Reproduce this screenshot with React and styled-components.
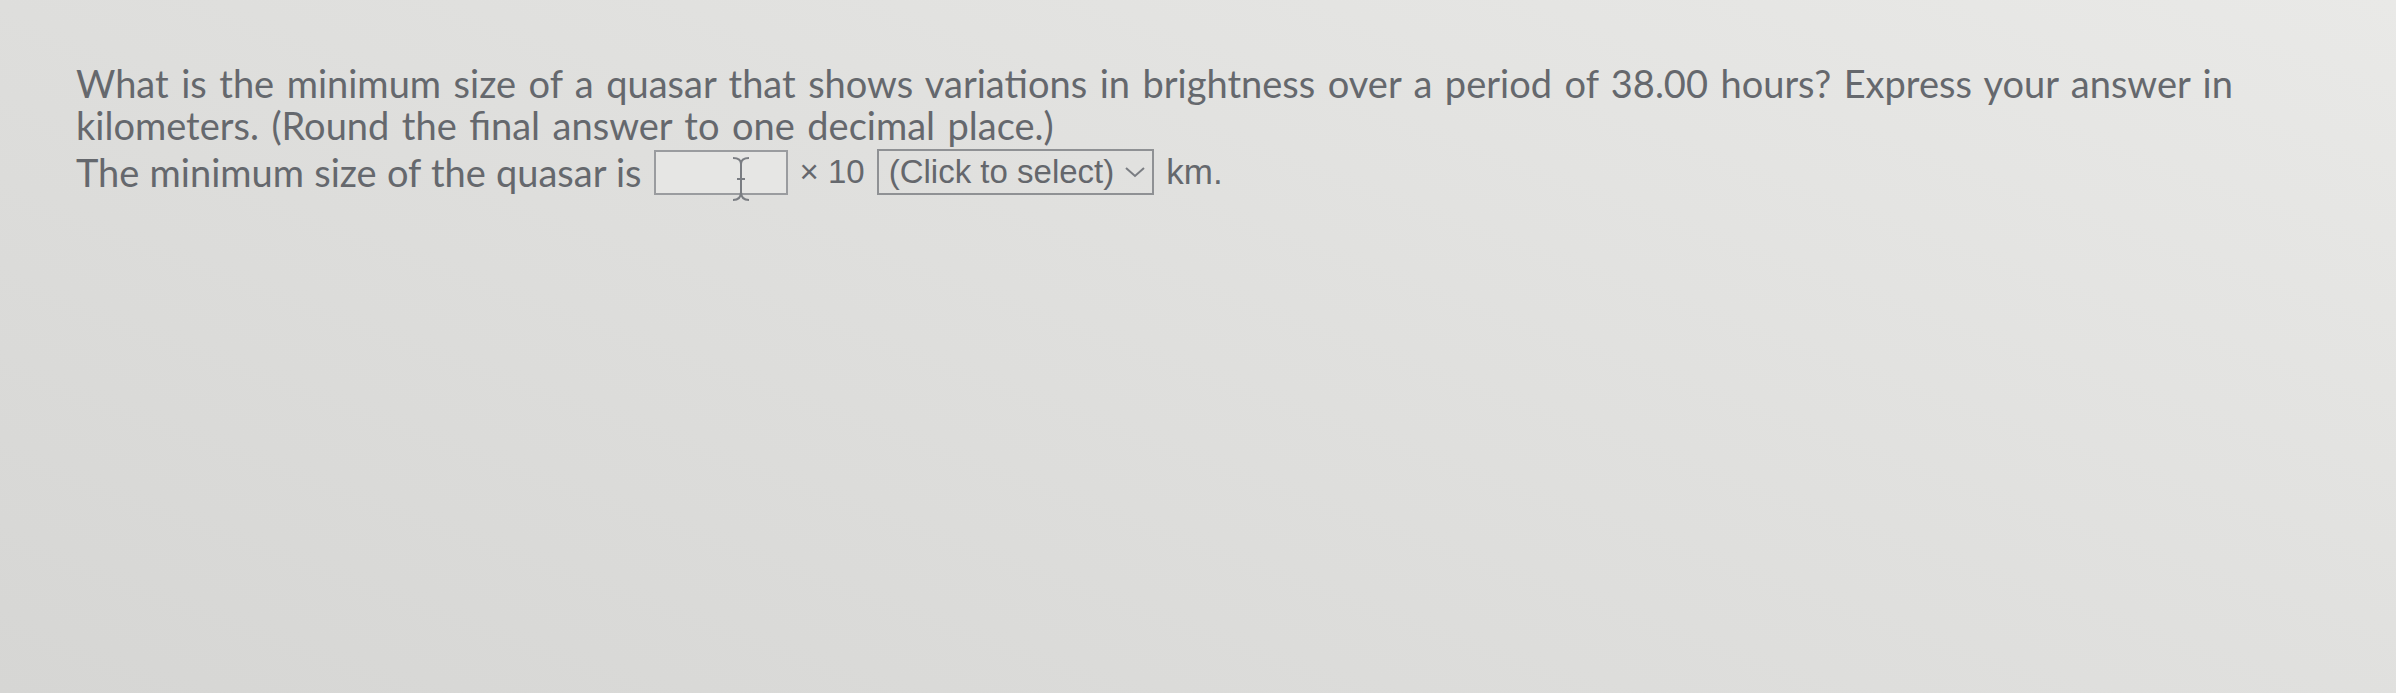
import React from 'react';
import styled, { createGlobalStyle } from 'styled-components';

const GlobalStyle = createGlobalStyle`
  html, body {
    margin: 0;
    padding: 0;
  }
  body {
    width: 2396px;
    height: 693px;
    overflow: hidden;
    background: linear-gradient(200deg, #e9e9e7 0%, #e0e0de 45%, #d6d6d4 100%);
  }
`;

const Page = styled.main`
  box-sizing: border-box;
  width: 2396px;
  height: 693px;
  padding: 62px 80px 0 76px;
  font-family: Lato, "Open Sans", sans-serif;
  color: #65686d;
`;

const Question = styled.p`
  margin: 0;
  font-size: 38px;
  line-height: 42px;
  word-spacing: 2.8px;
  width: 2240px;
`;

const AnswerLine = styled.div`
  display: flex;
  align-items: center;
  gap: 12px;
  font-size: 38px;
  margin-top: 3px;
`;

const Lead = styled.span`
  word-spacing: 0.5px;
`;

const InputBox = styled.span`
  position: relative;
  display: inline-block;
  width: 134px;
  height: 45px;
  border: 2px solid #9a9c9f;
  box-sizing: border-box;
  background: #e6e6e4;
`;

const Cursor = styled.svg`
  position: absolute;
  left: 74px;
  top: 4px;
`;

const Times = styled.span`
  font-family: "Liberation Sans", Arial, sans-serif;
  font-size: 33px;
`;

const Select = styled.span`
  display: inline-flex;
  align-items: center;
  gap: 10px;
  height: 46px;
  box-sizing: border-box;
  padding: 0 6px 0 10px;
  border: 2px solid #8f9194;
  font-family: "Liberation Sans", Arial, sans-serif;
  font-size: 33px;
  color: #64676c;
`;

const Unit = styled.span`
  font-family: "Liberation Sans", Arial, sans-serif;
  font-size: 35px;
`;

export default function App() {
  return (
    <>
      <GlobalStyle />
      <Page>
        <Question>
          What is the minimum size of a quasar that shows variations in brightness over a period of 38.00 hours? Express your answer in kilometers. (Round the final answer to one decimal place.)
        </Question>
        <AnswerLine>
          <Lead>The minimum size of the quasar is</Lead>
          <InputBox>
            <Cursor width="22" height="46" viewBox="0 0 22 46">
              <path d="M3 2 Q11 2 11 8 Q11 2 19 2 M11 8 V36 M7 23 H15 M3 44 Q11 44 11 36 Q11 44 19 44" fill="none" stroke="#7a7d82" strokeWidth="2" />
            </Cursor>
          </InputBox>
          <Times>× 10</Times>
          <Select>
            (Click to select)
            <svg width="22" height="14" viewBox="0 0 22 14">
              <path d="M2 3 L11 11 L20 3" fill="none" stroke="#7a7d82" strokeWidth="2" />
            </svg>
          </Select>
          <Unit>km.</Unit>
        </AnswerLine>
      </Page>
    </>
  );
}
